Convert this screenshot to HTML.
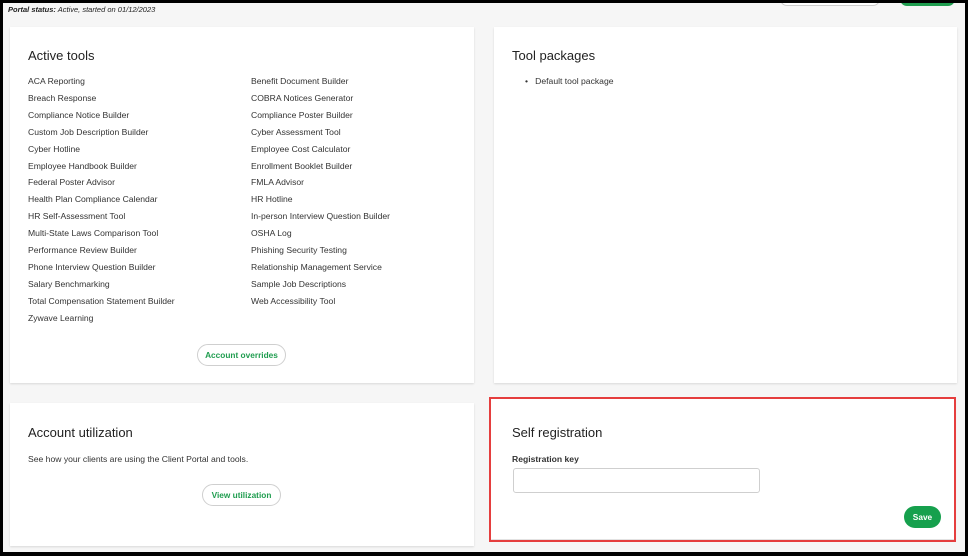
<!DOCTYPE html>
<html><head><meta charset="utf-8"><style>
*{margin:0;padding:0;box-sizing:border-box}
body{width:968px;height:556px;background:#000;font-family:"Liberation Sans",sans-serif;position:relative;overflow:hidden;color:#333}
.page{position:absolute;left:3px;top:3px;width:962px;height:549px;background:#f6f6f6;overflow:hidden}
.card{position:absolute;background:#fff;box-shadow:0 1px 2px rgba(0,0,0,.12)}
h2{position:absolute;font-size:13px;font-weight:normal;color:#222}
.it{position:absolute;font-size:8.6px;color:#333;white-space:nowrap}
.btn{position:absolute;border:1px solid #cfcfcf;border-radius:12px;background:#fff;color:#1f9d4f;font-weight:bold;font-size:8.3px;text-align:center}
</style></head><body>
<div class="page">
<div style="position:absolute;left:5px;top:2px;font-size:7.5px;font-style:italic;color:#222"><b>Portal status:</b> Active, started on 01/12/2023</div>
<div style="position:absolute;left:777px;top:-11px;width:100px;height:14px;border:1px solid #ccc;border-radius:8px;background:#fff"></div>
<div style="position:absolute;left:897px;top:-11px;width:55px;height:14px;border-radius:8px;background:#1f9d4f"></div>

<div class="card" style="left:7px;top:24px;width:464px;height:356px"></div>
<h2 style="left:25px;top:45px">Active tools</h2>
<div class="it" style="left:25px;top:70px;line-height:16.9px">ACA Reporting<br>Breach Response<br>Compliance Notice Builder<br>Custom Job Description Builder<br>Cyber Hotline<br>Employee Handbook Builder<br>Federal Poster Advisor<br>Health Plan Compliance Calendar<br>HR Self-Assessment Tool<br>Multi-State Laws Comparison Tool<br>Performance Review Builder<br>Phone Interview Question Builder<br>Salary Benchmarking<br>Total Compensation Statement Builder<br>Zywave Learning</div>
<div class="it" style="left:248px;top:70px;line-height:16.9px">Benefit Document Builder<br>COBRA Notices Generator<br>Compliance Poster Builder<br>Cyber Assessment Tool<br>Employee Cost Calculator<br>Enrollment Booklet Builder<br>FMLA Advisor<br>HR Hotline<br>In-person Interview Question Builder<br>OSHA Log<br>Phishing Security Testing<br>Relationship Management Service<br>Sample Job Descriptions<br>Web Accessibility Tool</div>
<div class="btn" style="left:194px;top:341px;width:89px;height:22px;line-height:20px">Account overrides</div>

<div class="card" style="left:491px;top:24px;width:463px;height:356px"></div>
<h2 style="left:509px;top:45px">Tool packages</h2>
<div class="it" style="left:522px;top:73px">•&nbsp;&nbsp; Default tool package</div>

<div class="card" style="left:7px;top:400px;width:464px;height:143px"></div>
<h2 style="left:25px;top:422px">Account utilization</h2>
<div class="it" style="left:25px;top:451px">See how your clients are using the Client Portal and tools.</div>
<div class="btn" style="left:199px;top:481px;width:79px;height:22px;line-height:20px">View utilization</div>

<div class="card" style="left:488px;top:396px;width:464px;height:140px"></div>
<div style="position:absolute;left:486px;top:394px;width:467px;height:145px;border:2px solid #e53e3e"></div>
<h2 style="left:509px;top:422px">Self registration</h2>
<div class="it" style="left:509px;top:451px;font-weight:bold;color:#333">Registration key</div>
<div style="position:absolute;left:510px;top:465px;width:247px;height:25px;border:1px solid #cfcfcf;border-radius:3px;background:#fff"></div>
<div style="position:absolute;left:901px;top:503px;width:37px;height:22px;border-radius:11px;background:#16a04d;color:#fff;font-weight:bold;font-size:8.3px;text-align:center;line-height:22px">Save</div>
</div>
</body></html>
